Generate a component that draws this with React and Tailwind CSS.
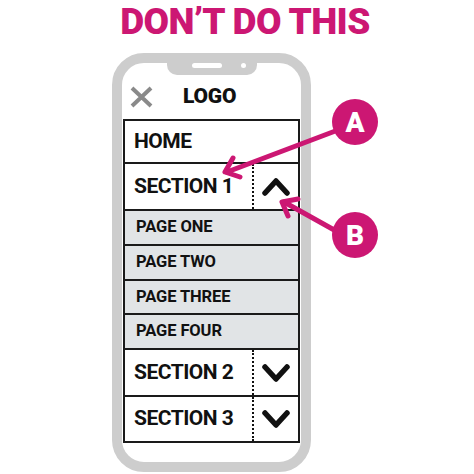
import React from "react";

const pink = "#cc1773";

function Chevron({ up }) {
  return (
    <svg width="28" height="20" viewBox="0 0 28 20">
      <polyline
        points={up ? "3,16 14,4 25,16" : "3,4 14,16 25,4"}
        fill="none"
        stroke="#111"
        strokeWidth="5.5"
        strokeLinecap="round"
        strokeLinejoin="round"
      />
    </svg>
  );
}

function SectionRow({ label, open, className }) {
  return (
    <div className={`flex items-stretch ${className}`}>
      <div className="flex-1 flex items-center pl-[9px] text-[21px] font-bold tracking-[-0.5px] text-[#111]">
        {label}
      </div>
      <div className="w-[46px] border-l-2 border-dotted border-[#111] flex items-center justify-center">
        <Chevron up={open} />
      </div>
    </div>
  );
}

function PageRow({ label, className }) {
  return (
    <div
      className={`flex items-center pl-[11px] bg-[#e1e4e6] text-[16.5px] font-bold tracking-[-0.1px] text-[#111] border-b-2 border-[#1a1a1a] ${className}`}
    >
      {label}
    </div>
  );
}

export default function App() {
  return (
    <div className="relative w-[474px] h-[474px] bg-white overflow-hidden font-['Roboto','Liberation_Sans',sans-serif]">
      <h1
        className="pl-[16px] text-center text-[37px] leading-[44px] font-black tracking-[-0.6px]"
        style={{ color: pink }}
      >
        DON’T DO THIS
      </h1>

      {/* phone frame */}
      <div className="ml-[112px] mt-[9px] w-[199px] h-[419px] rounded-[32px] border-[10px] border-[#cdcdcd] bg-white flex flex-col">
        <div className="mx-auto w-[90px] h-[12px] bg-[#cdcdcd] rounded-b-[10px] flex items-start pl-[25px]">
          <div className="w-[30px] h-[5px] bg-white rounded-full" />
          <div className="ml-[19px] w-[5px] h-[5px] bg-white rounded-full" />
        </div>

        <div className="h-[44px] flex items-center pl-[8px]">
          <svg width="23" height="22" viewBox="0 0 23 22">
            <path
              d="M2 2 L21 20 M21 2 L2 20"
              stroke="#8a8a8a"
              strokeWidth="4"
              fill="none"
            />
          </svg>
          <span className="ml-[30px] text-[21px] font-black tracking-[-0.2px] text-[#111]">
            LOGO
          </span>
        </div>

        {/* menu */}
        <div className="mx-px border-2 border-[#1a1a1a]">
          <div className="h-[43px] flex items-center pl-[9px] text-[21px] font-bold tracking-[-0.5px] text-[#111] border-b-2 border-[#1a1a1a]">
            HOME
          </div>
          <SectionRow label="SECTION 1" open className="h-[47px] border-b-2 border-[#1a1a1a]" />
          <PageRow label="PAGE ONE" className="h-[35px]" />
          <PageRow label="PAGE TWO" className="h-[35px]" />
          <PageRow label="PAGE THREE" className="h-[34px]" />
          <PageRow label="PAGE FOUR" className="h-[35px]" />
          <SectionRow label="SECTION 2" className="h-[47px] border-b-2 border-[#1a1a1a]" />
          <SectionRow label="SECTION 3" className="h-[44px]" />
        </div>
      </div>

      {/* callout arrows */}
      <svg
        className="absolute left-0 top-0 pointer-events-none"
        width="474"
        height="474"
        viewBox="0 0 474 474"
      >
        <g stroke={pink} strokeWidth="5" fill="none" strokeLinecap="round" strokeLinejoin="round">
          <line x1="338" y1="130" x2="227" y2="172" />
          <polyline points="233,158 225,172 240,177" />
          <line x1="336" y1="231" x2="284" y2="202" />
          <polyline points="288,216 282,202 298,199" />
        </g>
        <circle cx="355" cy="122" r="23" fill={pink} />
        <circle cx="355" cy="235" r="23" fill={pink} />
        <text x="355" y="132" textAnchor="middle" fill="#fff" fontSize="28" fontWeight="900" fontFamily="Roboto, sans-serif">
          A
        </text>
        <text x="355" y="245" textAnchor="middle" fill="#fff" fontSize="28" fontWeight="900" fontFamily="Roboto, sans-serif">
          B
        </text>
      </svg>
    </div>
  );
}
